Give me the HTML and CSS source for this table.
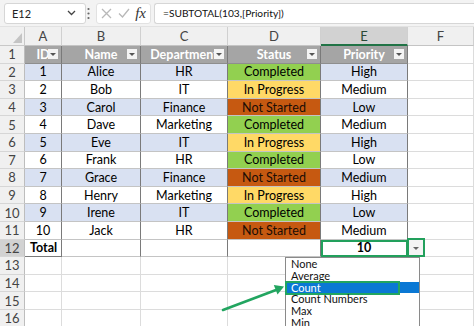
FILE: index.html
```html
<!DOCTYPE html>
<html>
<head>
<meta charset="utf-8">
<link rel="stylesheet" href="styles.css">
</head>
<body>
<div class="app">
  <div class="fbar">
    <div class="namebox"><span>E12</span>
      <svg width="9" height="6" viewBox="0 0 9 6"><polyline points="1,1 4.5,4.5 8,1" fill="none" stroke="#444" stroke-width="1.3"/></svg>
    </div>
    <div class="dots"><svg width="3" height="13" viewBox="0 0 3 13"><circle cx="1.5" cy="2" r="1.1" fill="#666"/><circle cx="1.5" cy="6.5" r="1.1" fill="#666"/><circle cx="1.5" cy="11" r="1.1" fill="#666"/></svg></div>
    <div class="fxbox">
      <svg width="11" height="11" viewBox="0 0 11 11"><path d="M1 1 L10 10 M10 1 L1 10" stroke="#b8b8b8" stroke-width="1.3" fill="none"/></svg>
      <svg width="12" height="10" viewBox="0 0 12 10"><polyline points="1,5.5 4.5,9 11,1" fill="none" stroke="#b8b8b8" stroke-width="1.3"/></svg>
      <span class="fx">fx</span>
    </div>
    <div class="formula">=SUBTOTAL(103,[Priority])</div>
  </div>

  <div class="sheet">
    <div class="corner"><span class="tri"></span></div>
    <div class="ch">A</div><div class="ch">B</div><div class="ch">C</div><div class="ch">D</div><div class="ch sel">E</div><div class="ch">F</div>

    <div class="rh">1</div>
    <div class="th">ID<i class="fb"></i></div>
    <div class="th">Name<i class="fb"></i></div>
    <div class="th">Department<i class="fb"></i></div>
    <div class="th">Status<i class="fb"></i></div>
    <div class="th">Priority<i class="fb"></i></div>
    <div class="c"></div>

    <div class="rh">2</div><div class="t b">1</div><div class="t b">Alice</div><div class="t b">HR</div><div class="t done">Completed</div><div class="t b">High</div><div class="c"></div>
    <div class="rh">3</div><div class="t">2</div><div class="t">Bob</div><div class="t">IT</div><div class="t prog">In Progress</div><div class="t">Medium</div><div class="c"></div>
    <div class="rh">4</div><div class="t b">3</div><div class="t b">Carol</div><div class="t b">Finance</div><div class="t not">Not Started</div><div class="t b">Low</div><div class="c"></div>
    <div class="rh">5</div><div class="t">4</div><div class="t">Dave</div><div class="t">Marketing</div><div class="t done">Completed</div><div class="t">Medium</div><div class="c"></div>
    <div class="rh">6</div><div class="t b">5</div><div class="t b">Eve</div><div class="t b">IT</div><div class="t prog">In Progress</div><div class="t b">High</div><div class="c"></div>
    <div class="rh">7</div><div class="t">6</div><div class="t">Frank</div><div class="t">HR</div><div class="t done">Completed</div><div class="t">Low</div><div class="c"></div>
    <div class="rh">8</div><div class="t b">7</div><div class="t b">Grace</div><div class="t b">Finance</div><div class="t not">Not Started</div><div class="t b">Medium</div><div class="c"></div>
    <div class="rh">9</div><div class="t">8</div><div class="t">Henry</div><div class="t">Marketing</div><div class="t prog">In Progress</div><div class="t">High</div><div class="c"></div>
    <div class="rh">10</div><div class="t b">9</div><div class="t b">Irene</div><div class="t b">IT</div><div class="t done">Completed</div><div class="t b">Low</div><div class="c"></div>
    <div class="rh">11</div><div class="t">10</div><div class="t">Jack</div><div class="t">HR</div><div class="t not">Not Started</div><div class="t">Medium</div><div class="c"></div>

    <div class="rh sel">12</div><div class="t tot">Total</div><div class="t"></div><div class="t"></div><div class="t"></div><div class="t tot cur">10</div><div class="c ddcell"><span class="ddbtn"></span></div>

    <div class="rh">13</div><div class="c"></div><div class="c"></div><div class="c"></div><div class="c"></div><div class="c"></div><div class="c"></div>
    <div class="rh">14</div><div class="c"></div><div class="c"></div><div class="c"></div><div class="c"></div><div class="c"></div><div class="c"></div>
    <div class="rh">15</div><div class="c"></div><div class="c"></div><div class="c"></div><div class="c"></div><div class="c"></div><div class="c"></div>
    <div class="rh">16</div><div class="c"></div><div class="c"></div><div class="c"></div><div class="c"></div><div class="c"></div><div class="c"></div>
  </div>

  <ul class="dropdown">
    <li>None</li>
    <li>Average</li>
    <li class="hl">Count<span class="mark"></span></li>
    <li>Count Numbers</li>
    <li>Max</li>
    <li>Min</li>
  </ul>

  <svg class="arrow" width="474" height="326" viewBox="0 0 474 326">
    <line x1="223" y1="310" x2="276" y2="290" stroke="#22a560" stroke-width="2.6" stroke-linecap="round"/>
    <polygon points="284,286.5 277.5,294.5 273.8,285" fill="#22a560"/>
  </svg>
</div>
</body>
</html>
```

FILE: styles.css
```css
* { box-sizing: border-box; }
html, body { margin: 0; padding: 0; background: #fff; }
.app {
  position: relative;
  width: 474px;
  height: 326px;
  overflow: hidden;
}

/* formula bar */
.fbar {
  display: flex;
  align-items: center;
  height: 27px;
  background: #f3f3f3;
  padding-left: 4px;
  border-bottom: 1px solid #e2e2e2;
  font-family: Lato, "Open Sans", sans-serif;
}
.namebox {
  width: 82px;
  height: 21px;
  background: #fff;
  border: 1px solid #d6d6d6;
  border-radius: 3px;
  display: flex;
  align-items: center;
  justify-content: space-between;
  padding: 0 9px 0 7px;
  font-size: 11px;
  color: #222;
}
.dots {
  width: 10px;
  display: flex;
  justify-content: flex-start;
  padding-left: 1px;
}
.fxbox {
  width: 55px;
  height: 21px;
  background: #fff;
  border: 1px solid #e2e2e2;
  border-radius: 3px;
  display: flex;
  align-items: center;
  justify-content: space-between;
  padding: 0 4px 0 4px;
}
.fx {
  font-family: "Liberation Serif", serif;
  font-style: italic;
  font-size: 15px;
  color: #333;
  line-height: 1;
}
.formula {
  flex: 1;
  margin-left: 3px;
  height: 21px;
  background: #fff;
  border: 1px solid #d6d6d6;
  border-right: none;
  border-radius: 3px 0 0 3px;
  padding-left: 8px;
  font-size: 10.2px;
  color: #111;
  display: flex;
  align-items: center;
}

/* sheet grid */
.sheet {
  display: grid;
  grid-template-columns: 25px 37px 79px 87px 93px 87px 66px;
  grid-template-rows: 19px repeat(16, 17.6px);
  font-family: Lato, "Open Sans", sans-serif;
}
.sheet > div {
  display: flex;
  align-items: center;
  justify-content: center;
  position: relative;
  overflow: hidden;
  white-space: nowrap;
  border-right: 1px solid #dcdcdc;
  border-bottom: 1px solid #dcdcdc;
  font-size: 12.5px;
  color: #000;
}
.sheet > .corner {
  background: #f0f0f0;
  justify-content: flex-end;
  align-items: flex-end;
  border-right-color: #c8c8c8;
  border-bottom-color: #c8c8c8;
}
.tri {
  width: 0;
  height: 0;
  border-left: 9px solid transparent;
  border-bottom: 10px solid #c4c4c4;
  margin: 0 2px 2px 0;
}
.sheet > .ch {
  background: #f0f0f0;
  color: #444;
  font-size: 13px;
  border-right-color: #d0d0d0;
  border-bottom-color: #c4c4c4;
}
.sheet > .ch.sel {
  background: #d2d2d2;
  color: #2a4a36;
  border-bottom: 2px solid #217346;
}
.sheet > .rh {
  background: #f0f0f0;
  color: #444;
  font-size: 13px;
  border-right-color: #bdbdbd;
  border-bottom-color: #d6d6d6;
}
.sheet > .rh.sel {
  background: #d2d2d2;
}
.sheet > .th {
  background: #a5a5a5;
  color: #fff;
  font-weight: 700;
  border-right: 1px solid #7a7a7a;
  border-bottom: 1px solid #8e8e8e;
}
.fb {
  position: absolute;
  right: 3px;
  top: 50%;
  margin-top: -5px;
  width: 10px;
  height: 10px;
  background: #f4f4f4;
  display: flex;
  align-items: center;
  justify-content: center;
}
.fb::after {
  content: "";
  width: 0;
  height: 0;
  border-left: 3px solid transparent;
  border-right: 3px solid transparent;
  border-top: 3px solid #555;
  margin-top: 1px;
}
.sheet > .t {
  border-right: 1px solid #7a7a7a;
  border-bottom: 1px solid #c4c4c4;
}
.sheet > .b { background: #d9e1f2; }
.sheet > .done { background: #92d050; }
.sheet > .prog { background: #ffd966; }
.sheet > .not { background: #c65911; color: #1a0d05; }
.sheet > .tot {
  font-weight: 700;
  justify-content: flex-start;
  padding-left: 5px;
  border-bottom-color: #7a7a7a;
}
.sheet > .tot.cur {
  justify-content: center;
  padding-left: 0;
  outline: 2px solid #22a05c;
  outline-offset: -2px;
}
.sheet > .ddcell {
  justify-content: flex-start;
  overflow: visible;
}
.ddbtn {
  width: 18px;
  height: 19px;
  margin-left: -1px;
  border: 2px solid #22a05c;
  background: #f4f4f4;
  display: flex;
  align-items: center;
  justify-content: center;
}
.ddbtn::after {
  content: "";
  width: 0;
  height: 0;
  border-left: 3px solid transparent;
  border-right: 3px solid transparent;
  border-top: 3px solid #666;
  margin-top: 2px;
}

/* dropdown list */
.dropdown {
  position: absolute;
  left: 285px;
  top: 257px;
  width: 135px;
  height: 80px;
  margin: 0;
  padding: 0;
  list-style: none;
  background: #fff;
  border: 1px solid #8a8a8a;
  font-family: Lato, "Open Sans", sans-serif;
  font-size: 11px;
  color: #111;
}
.dropdown li {
  position: relative;
  height: 11.8px;
  line-height: 11.8px;
  padding-left: 5px;
}
.dropdown li.hl {
  background: #0a78d4;
  color: #fff;
}
.mark {
  position: absolute;
  left: -1px;
  top: -1px;
  width: 115px;
  height: 14px;
  border: 2px solid #22a560;
}

.arrow {
  position: absolute;
  left: 0;
  top: 0;
  pointer-events: none;
}
```
